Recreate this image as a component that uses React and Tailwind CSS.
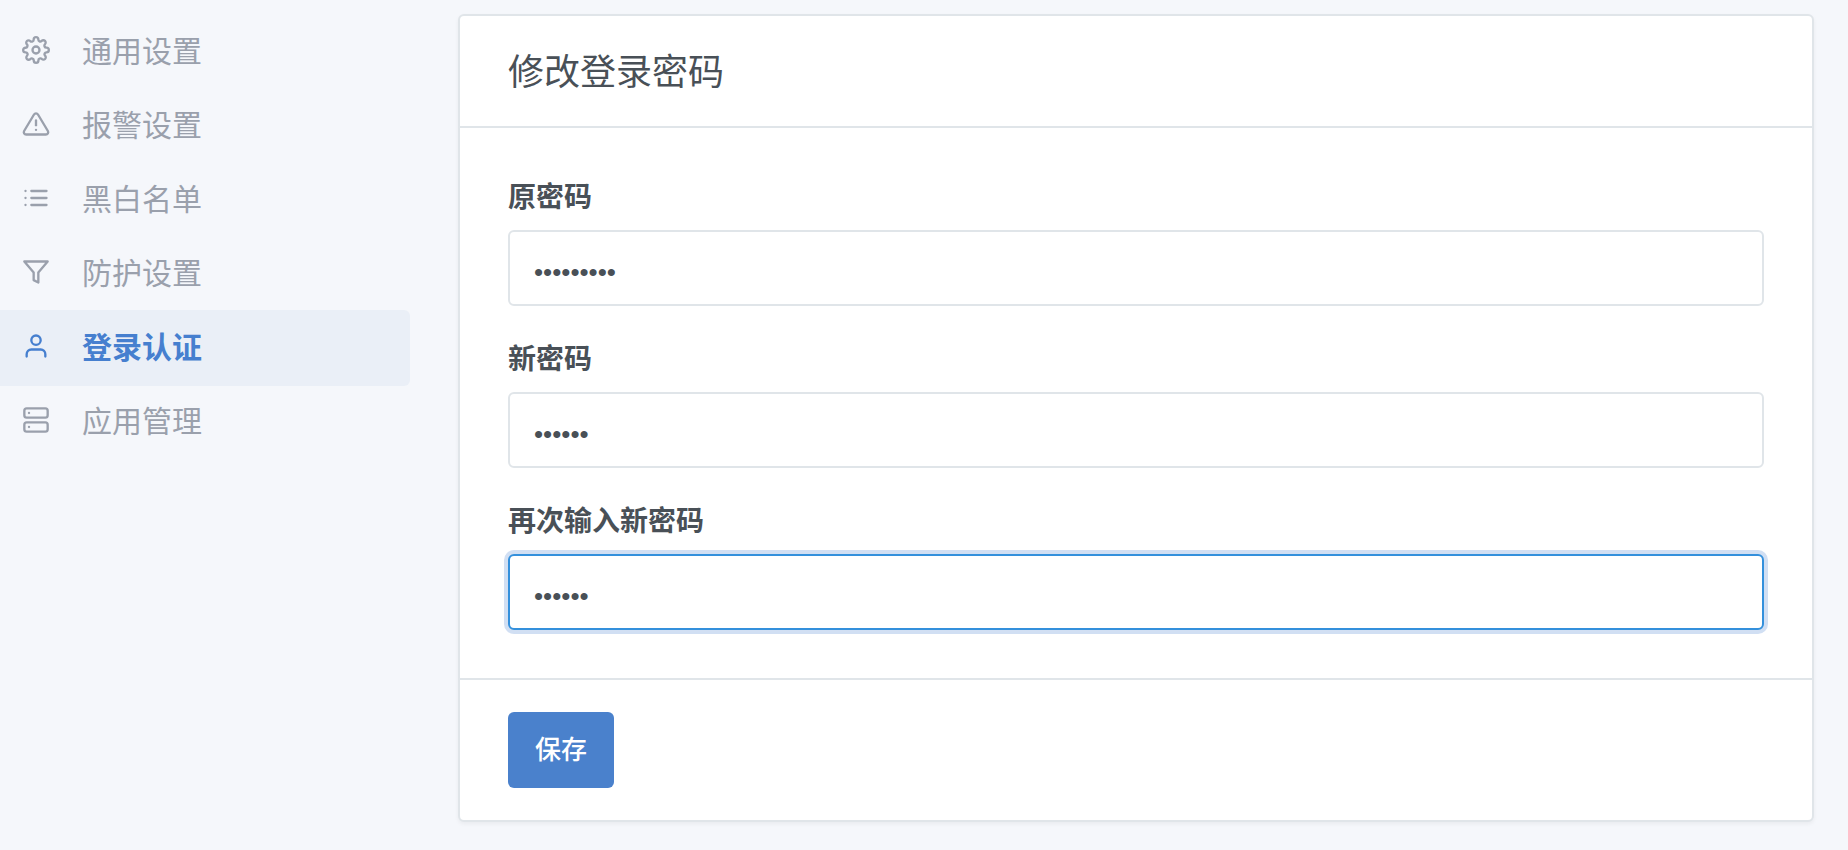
import React, { useState } from "react";
import {
  FiSettings,
  FiAlertTriangle,
  FiList,
  FiFilter,
  FiUser,
  FiServer,
} from "react-icons/fi";

const menuItems = [
  { key: "general", label: "通用设置", icon: FiSettings },
  { key: "alarm", label: "报警设置", icon: FiAlertTriangle },
  { key: "list", label: "黑白名单", icon: FiList },
  { key: "protect", label: "防护设置", icon: FiFilter },
  { key: "auth", label: "登录认证", icon: FiUser },
  { key: "app", label: "应用管理", icon: FiServer },
];

const fields = [
  { name: "oldPassword", label: "原密码" },
  { name: "newPassword", label: "新密码" },
  { name: "confirmPassword", label: "再次输入新密码" },
];

const Sidebar = ({ active, onSelect }) => (
  <nav className="w-[410px] shrink-0">
    {menuItems.map(({ key, label, icon: Icon }) => (
      <a
        key={key}
        href={`#${key}`}
        onClick={() => onSelect(key)}
        className={`flex items-center h-19 -mb-0.5 pl-[22px] rounded-r-md text-[30px] leading-[44px] ${
          active === key
            ? "bg-[#eaeff7] text-[#467fcf] font-semibold"
            : "text-[#9aa0ac]"
        }`}
      >
        <Icon size={28} className="mr-8 mb-1 shrink-0" />
        <span>{label}</span>
      </a>
    ))}
  </nav>
);

const App = () => {
  const [active, setActive] = useState("auth");
  const [focused, setFocused] = useState("confirmPassword");
  const [form, setForm] = useState({
    oldPassword: "password1",
    newPassword: "secret",
    confirmPassword: "secret",
  });

  const handleChange = (e) => {
    setForm({ ...form, [e.target.name]: e.target.value });
  };

  return (
    <div className="flex items-start min-h-screen bg-[#f5f7fb] pt-3.5 pb-7 pr-[34px] gap-12 text-[#495057] font-['Liberation_Sans','Noto_Sans_CJK_SC',sans-serif]">
      <Sidebar active={active} onSelect={setActive} />

      <form
        onSubmit={(e) => e.preventDefault()}
        className="flex-1 min-w-0 bg-white border-2 border-[#e0e5e9] rounded-md shadow-[0_2px_4px_rgba(0,0,0,0.05)]"
      >
        {/* Header */}
        <div className="flex items-center h-28 px-12 pt-1 border-b-2 border-[#e0e5e9]">
          <h3 className="text-4xl">修改登录密码</h3>
        </div>

        {/* Fields */}
        <div className="flex flex-col gap-8 p-12">
          {fields.map(({ name, label }) => (
            <div key={name}>
              <label
                htmlFor={name}
                className="block mb-2.5 text-[28px] leading-[44px] font-semibold"
              >
                {label}
              </label>
              <input
                id={name}
                name={name}
                type="password"
                value={form[name]}
                onChange={handleChange}
                onFocus={() => setFocused(name)}
                className={`block w-full h-19 px-6 pt-2 border-2 rounded-md bg-white text-[26px] outline-none ${
                  focused === name
                    ? "border-[#3490dc] shadow-[0_0_0_4px_#d1dff3]"
                    : "border-[#e0e5e9]"
                }`}
              />
            </div>
          ))}
        </div>

        {/* Footer */}
        <div className="px-12 py-8 border-t-2 border-[#e0e5e9]">
          <button
            type="submit"
            className="h-19 px-[27px] rounded-md bg-[#4a81cc] text-white text-[26px] font-medium"
          >
            保存
          </button>
        </div>
      </form>
    </div>
  );
};

export default App;
